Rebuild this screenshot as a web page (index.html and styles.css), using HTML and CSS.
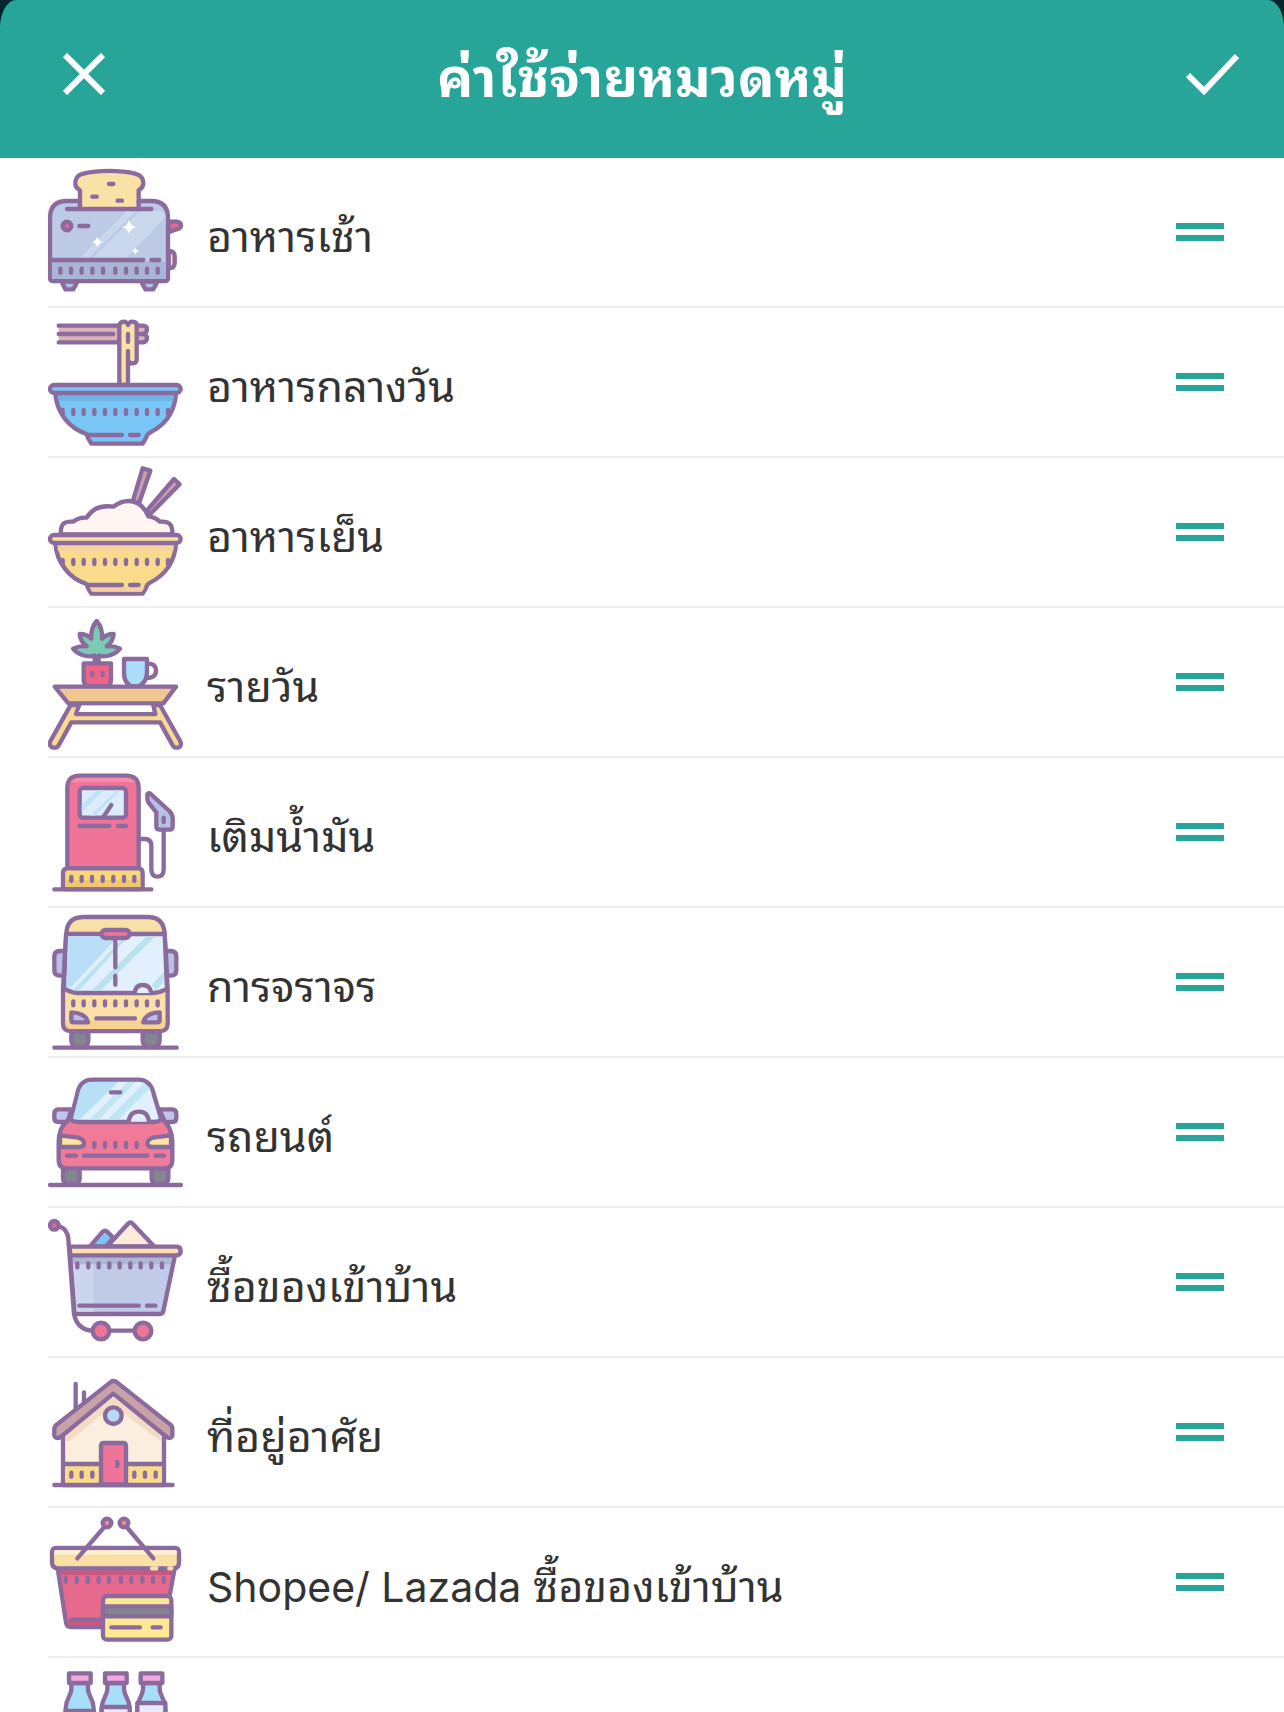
FILE: index.html
```html
<!DOCTYPE html>
<html lang="th">
<head>
    <meta charset="UTF-8">
    <meta name="viewport" content="width=device-width, initial-scale=1.0">
    <title>ค่าใช้จ่ายหมวดหมู่</title>
    <link rel="stylesheet" href="styles.css">
</head>
<body>
    <header class="topbar">
        <button class="topbar-btn" type="button" aria-label="ปิด">
            <svg class="close-icon" viewBox="0 0 42 42"><path d="M2 2L40 40M40 2L2 40"/></svg>
        </button>
        <h1 class="title">ค่าใช้จ่ายหมวดหมู่</h1>
        <button class="topbar-btn save" type="button" aria-label="บันทึก">
            <svg class="check-icon" viewBox="0 0 54 42"><path d="M2 22L18 38L51 3"/></svg>
        </button>
    </header>

    <ul class="list">
        <!-- toaster -->
        <li class="row">
            <svg class="icon" viewBox="54 9 408 444">
                <path fill="#fae2a6" d="M150 160V106C128 94 132 62 160 56C205 45 270 45 315 56C346 64 346 94 326 106V160z"/>
                <path fill="#e8698e" d="M416 200H440Q454 202 453 212Q452 220 440 223L416 232z"/>
                <path fill="#fae2a6" d="M416 288Q434 288 434 304V324Q434 340 416 340z"/>
                <path fill="#b4bfe3" d="M95 380L106 403H130L142 380zM334 380L346 403H370L382 380z"/>
                <path fill="#bccae6" d="M60 368V190Q60 138 110 138H364Q414 138 414 190V368Q414 378 404 378H70Q60 378 60 368z"/>
                <path class="flat" fill="#cad8ee" d="M150 308L290 168H395L408 184L290 308z"/>
                <path class="flat" fill="#bccae6" d="M178 308L318 168H330L190 308z"/>
                <path class="flat" fill="#a8b5d5" d="M66 320H408V372H66z"/>
                <path class="flat" fill="#fae2a6" d="M156 128H320V158H156z"/>
                <path d="M150 160V135M326 160V135M111 162H364M66 315H340M364 315H388M148 213H175"/>
                <path d="M237 87H250M187 125H200M263 137H276"/>
                <path d="M91 341v12M123 341v12M155 341v12M187 341v12M219 341v12M256 341v12M288 341v12M320 341v12M351 341v12M383 341v12"/>
                <circle cx="111" cy="213" r="13" fill="#ee5fa7"/>
                <path class="flat" fill="#fff" d="M297 194Q301 212 318 216Q301 220 297 238Q293 220 276 216Q293 212 297 194zM202 244Q205 258 218 261Q205 264 202 278Q199 264 186 261Q199 258 202 244zM316 277Q318 286 327 288Q318 290 316 299Q314 290 305 288Q314 286 316 277z"/>
            </svg>
            <span class="label">อาหารเช้า</span>
            <button class="handle" type="button" aria-label="ย้าย"></button>
        </li>
        <!-- noodle bowl -->
        <li class="row">
            <svg class="icon" viewBox="54 9 408 444">
                <path class="flat" fill="#ddb3b5" d="M86 62H345L352 87L345 112H86z"/>
                <path fill="none" d="M86 62H340Q352 64 351 74Q350 84 340 87Q352 90 351 100Q350 110 340 112H86M86 87H250M322 87H340"/>
                <path fill="#fae2a6" d="M268 240V62Q270 50 282 50Q290 50 294 60Q298 50 308 50Q320 50 320 62V165Q318 175 308 175Q296 175 294 165V240z"/>
                <path d="M294 87V111M294 138V170"/>
                <path fill="#78c6f5" d="M76 264C80 325 120 370 165 385Q172 388 174 399L184 416H338L348 399Q350 388 360 383C405 360 435 320 438 264z"/>
                <path class="flat" fill="#6eb5e6" d="M82 270H432L430 288H84z"/>
                <rect x="60" y="240" width="392" height="24" rx="12" fill="#78c6f5"/>
                <path d="M174 390H276M300 390H326"/>
                <path d="M98 315v12M130 315v12M161 315v12M193 315v12M225 315v12M256 315v12M288 315v12M320 315v12M351 315v12M383 315v12M414 315v12"/>
            </svg>
            <span class="label">อาหารกลางวัน</span>
            <button class="handle" type="button" aria-label="ย้าย"></button>
        </li>
        <!-- rice bowl -->
        <li class="row">
            <svg class="icon" viewBox="54 9 408 444">
                <path fill="#cba0ae" d="M309 136L338 40L361 47L326 148zM348 170L432 72L449 88L360 178z"/>
                <path fill="#fff6f2" d="M92 238C92 205 102 198 130 200Q145 186 170 188C188 158 215 150 250 155C290 125 335 135 355 184Q375 186 390 200C420 198 428 210 427 238z"/>
                <path fill="#f8dc8c" d="M76 264C80 325 120 370 165 385Q172 388 174 399L184 416H338L348 399Q350 388 360 383C405 360 435 320 438 264z"/>
                <path class="flat" fill="#f5d29c" d="M82 270H432L430 288H84zM178 396H344L336 410H186z"/>
                <rect x="60" y="240" width="392" height="24" rx="12" fill="#fbe2a0"/>
                <path d="M174 390H276M300 390H326"/>
                <path d="M98 315v12M130 315v12M161 315v12M193 315v12M225 315v12M256 315v12M288 315v12M320 315v12M351 315v12M383 315v12M414 315v12"/>
            </svg>
            <span class="label">อาหารเย็น</span>
            <button class="handle" type="button" aria-label="ย้าย"></button>
        </li>
        <!-- table with plant and mug -->
        <li class="row">
            <svg class="icon" viewBox="54 9 408 444">
                <path fill="#79cbb4" d="M194 174V152C172 158 144 150 129 131C144 124 158 122 170 124C157 114 150 100 149 87C163 87 175 92 184 101C182 80 188 62 200 48C212 62 218 80 216 101C225 92 237 87 251 87C250 100 243 114 230 124C242 122 256 124 270 131C255 150 228 158 206 152V174z"/>
                <path fill="#ee6488" d="M161 175H243V225Q243 240 230 244H175Q161 240 161 225z"/>
                <path d="M187 204v7M218 204v7"/>
                <path fill="none" d="M355 176Q378 176 378 197Q378 218 350 219"/>
                <path fill="#a9ddfa" d="M282 162H351V205Q348 236 325 244H306Q282 235 282 205z"/>
                <path fill="#f8da91" d="M122 300L62 407C56 420 62 428 74 428Q82 428 86 421L124 352H390L428 421Q432 428 440 428C452 428 456 418 450 407L390 300H370L376 327H138L148 300z"/>
                <path fill="#f0c791" d="M74 245H438L400 295H115z"/>
                <path class="flat" fill="#fff" d="M156 302H357L366 321H146z"/>
            </svg>
            <span class="label">รายวัน</span>
            <button class="handle" type="button" aria-label="ย้าย"></button>
        </li>
        <!-- fuel pump -->
        <li class="row">
            <svg class="icon" viewBox="54 9 408 444">
                <path fill="#ef7497" d="M112 340V100Q112 62 150 62H288Q326 62 326 100V340z"/>
                <path class="flat" fill="#f88caa" d="M120 82Q130 68 150 68H288Q308 68 318 82z"/>
                <rect x="149" y="99" width="139" height="89" rx="10" fill="#dcecfc"/>
                <path class="flat" fill="#bfe2f4" d="M155 150L200 105H222L155 172zM182 182L259 105H272L195 182z"/>
                <path d="M220 186L244 150M149 213H238M264 213H288"/>
                <path fill="#f8d67c" d="M99 402V354Q99 340 113 340H324Q338 340 338 354V402z"/>
                <path class="flat" fill="#efc76c" d="M106 375H331V397H106z"/>
                <path d="M73 403H364M124 366v12M155 366v12M186 366v12M218 366v12M250 366v12M282 366v12M313 366v12"/>
                <path fill="none" d="M328 252H344Q364 252 364 272V345Q366 365 382 365Q400 365 401 345V228"/>
                <path fill="#b8c0e4" d="M352 124Q350 113 360 115L418 168Q428 178 428 190V214Q428 224 418 224H389Q379 224 379 214V172L355 142Q351 136 352 124z"/>
                <path d="M401 188v13"/>
            </svg>
            <span class="label">เติมน้ำมัน</span>
            <button class="handle" type="button" aria-label="ย้าย"></button>
        </li>
        <!-- bus -->
        <li class="row">
            <svg class="icon" viewBox="54 9 408 444">
                <path fill="#82868f" d="M124 380H175V405Q175 423 160 426H138Q124 423 124 405zM338 380H389V405Q389 423 375 426H353Q338 423 338 405z"/>
                <path fill="#b8c0e8" d="M105 138H90Q73 138 73 154V196Q73 212 90 212H105zM408 138H422Q439 138 439 154V196Q439 212 422 212H408z"/>
                <path fill="#fae0a5" d="M99 250L109 85Q112 36 160 36H354Q400 36 404 85L413 250V355Q413 378 390 378H122Q99 378 99 355z"/>
                <path class="flat" fill="#f8d38f" d="M106 345H406Q408 372 390 372H122Q104 372 106 345z"/>
                <path fill="#e2f0fd" d="M108 87H404L411 252Q390 263 370 264H142Q118 262 102 250z"/>
                <path class="flat" fill="#b9def7" d="M115 94H265L125 245L109 245z"/>
                <path class="flat" fill="#b9e1f0" d="M128 256L285 94H296L146 257zM184 257L350 94H376L210 257zM366 240L401 200V230L378 256z"/>
                <path fill="#e2f0fd" d="M314 264Q316 240 338 240Q360 240 364 264"/>
                <rect x="214" y="75" width="85" height="24" rx="12" fill="#ef7497"/>
                <path d="M256 100V187M256 212V239M199 340H315M73 428H440"/>
                <path d="M130 289v12M161 289v12M193 289v12M225 289v12M256 289v12M288 289v12M320 289v12M351 289v12M383 289v12"/>
                <path fill="#b8c0e8" d="M124 322C148 322 170 332 174 352H132Q124 352 124 344zM389 322C365 322 344 332 340 352H381Q389 352 389 344z"/>
            </svg>
            <span class="label">การจราจร</span>
            <button class="handle" type="button" aria-label="ย้าย"></button>
        </li>
        <!-- car -->
        <li class="row">
            <svg class="icon" viewBox="54 9 408 444">
                <path fill="#82868f" d="M99 340H149V370Q149 382 138 387H111Q99 382 99 370zM365 340H415V370Q415 382 403 387H376Q365 382 365 370z"/>
                <path fill="#bfc6ec" d="M125 163H86Q73 163 73 176V188Q73 201 86 201H112zM388 163H426Q439 163 439 176V188Q439 201 426 201H405z"/>
                <path fill="#f17a99" d="M122 190H394Q410 202 419 222Q427 240 427 260V315Q427 340 402 340H112Q86 340 86 315V260Q86 240 93 222Q105 200 122 190z"/>
                <path fill="#e2f0fd" d="M122 193L141 120Q148 74 188 74H325Q363 74 372 120L394 193Q384 201 370 201H145Q130 201 122 193z"/>
                <path class="flat" fill="#b7dff6" d="M130 190L147 120Q155 81 188 81H265L148 194z"/>
                <path class="flat" fill="#c0e5f5" d="M178 194L293 81H318L205 194zM232 194L342 84L360 99L265 194z"/>
                <path fill="#e2f0fd" d="M296 200C298 180 310 170 327 170C345 170 355 182 357 200"/>
                <path fill="#fce5a0" d="M90 241L145 248Q162 254 162 264Q162 276 148 276H90zM423 241L368 248Q352 254 352 264Q352 276 366 276H423z"/>
                <path d="M243 112H271M111 302H138M162 302H352M377 302H402M60 390H453"/>
                <path d="M193 264v12M225 264v12M256 264v12M288 264v12M320 264v12"/>
            </svg>
            <span class="label">รถยนต์</span>
            <button class="handle" type="button" aria-label="ย้าย"></button>
        </li>
        <!-- shopping cart -->
        <li class="row">
            <svg class="icon" viewBox="54 9 408 444">
                <path fill="#7fc4f8" d="M180 124L218 80Q225 74 232 80L250 98L228 124z"/>
                <path fill="#fdebd9" d="M232 124L294 56Q301 48 308 56L372 124z"/>
                <path fill="#bfcbe7" d="M121 151H435L400 318Q398 327 388 327H134z"/>
                <path class="flat" fill="#cbd6ec" d="M128 170H190V320H140z"/>
                <path class="flat" fill="#adb8d9" d="M128 157H427L422 178H129z"/>
                <path fill="#fbe2ac" d="M119 125H440Q452 126 452 138Q452 150 440 151H121z"/>
                <path fill="none" d="M90 65Q112 72 115 102L132 327Q142 375 188 377H338"/>
                <path d="M148 302H326M351 302H376"/>
                <path d="M142 175v12M175 175v12M206 175v12M238 175v12M269 175v12M301 175v12M332 175v12M364 175v12M396 175v12"/>
                <circle cx="73" cy="61" r="13" fill="#ec6597"/>
                <circle cx="213" cy="378" r="25" fill="#ef7497"/>
                <circle cx="339" cy="378" r="25" fill="#ef7497"/>
            </svg>
            <span class="label">ซื้อของเข้าบ้าน</span>
            <button class="handle" type="button" aria-label="ย้าย"></button>
        </li>
        <!-- house -->
        <li class="row">
            <svg class="icon" viewBox="54 9 408 444">
                <path d="M137 87V180M162 112V160"/>
                <path fill="#fbeede" d="M99 230L250 112L402 230V390H99z"/>
                <path class="flat" fill="#f3dcc3" d="M106 238L250 125L395 238V262L250 150L120 258L106 260z"/>
                <path class="flat" fill="#f8dc8c" d="M106 332H395V386H106z"/>
                <path d="M99 327H402"/>
                <path fill="#c9a1a9" d="M250 78Q256 78 262 83L420 208Q428 214 427 224V242Q422 254 410 246L250 116L92 246Q78 254 73 242V224Q73 214 81 208L240 83Q245 78 250 78z"/>
                <circle cx="250" cy="182" r="25" fill="#b5dbf7"/>
                <path fill="#ef7497" d="M213 388V273Q213 264 222 264H279Q288 264 288 273V388z"/>
                <path d="M73 390H428M262 321v12M124 353v12M155 353v12M187 353v12M313 353v12M345 353v12M377 353v12"/>
            </svg>
            <span class="label">ที่อยู่อาศัย</span>
            <button class="handle" type="button" aria-label="ย้าย"></button>
        </li>
        <!-- basket and card -->
        <li class="row">
            <svg class="icon" viewBox="54 9 408 444">
                <path fill="#e8698e" d="M83 190L108 352Q110 366 124 366H392Q402 366 404 352L434 190z"/>
                <path class="flat" fill="#ce567e" d="M91 197H427L425 210H93zM114 346H219V360H118z"/>
                <path d="M124 344H219"/>
                <path fill="#f9dfa4" d="M66 142Q66 129 79 129H434Q447 129 447 142V172Q447 190 432 190H84Q66 190 66 172z"/>
                <path class="flat" fill="#fdf0d0" d="M73 136H440V149H73z"/>
                <path class="gap" d="M366 190H382M418 190H424"/>
                <path d="M390 192H402M142 160L223 66M370 160L290 66"/>
                <path d="M107 218v12M140 218v12M173 218v12M206 218v12M237 218v12M273 218v12M304 218v12M337 218v12M369 218v12M401 218v12"/>
                <circle cx="231" cy="54" r="13" fill="#f58c91"/>
                <circle cx="282" cy="54" r="13" fill="#f58c91"/>
                <rect x="219" y="273" width="205" height="131" rx="12" fill="#fde895"/>
                <path fill="#82868f" d="M219 304H424V334H219z"/>
                <path d="M244 367H330M368 367H392"/>
            </svg>
            <span class="label"><span class="latin">Shopee/ Lazada</span> ซื้อของเข้าบ้าน</span>
            <button class="handle" type="button" aria-label="ย้าย"></button>
        </li>
        <!-- milk bottles -->
        <li class="row">
            <svg class="icon" viewBox="54 9 408 444">
                <path fill="#a8dff8" d="M124 84H174V102C174 125 191 130 191 160V400H107V160C107 130 124 125 124 102zM232 84H282V102C282 125 299 130 299 160V400H215V160C215 130 232 125 232 102zM339 84H389V102C389 125 406 130 406 160V400H322V160C322 130 339 125 339 102z"/>
                <path fill="#e6ecfb" d="M107 168H191V400H107zM215 156H299V400H215zM322 144H406V400H322z"/>
                <path fill="#f2a9dc" d="M117 55H182V84H117zM225 55H290V84H225zM332 55H397V84H332z"/>
            </svg>
            <span class="label"></span>
            <button class="handle" type="button" aria-label="ย้าย"></button>
        </li>
    </ul>
</body>
</html>
```
FILE: styles.css
```css
* {
    box-sizing: border-box;
}
body {
    margin: 0;
    height: 100vh;
    display: flex;
    flex-direction: column;
    overflow: hidden;
    background-color: #04262c;
    color: #333;
    font-family: Inter, Thonburi, "Noto Sans Thai Looped", Loma, Garuda, "Noto Sans Thai", "Noto Sans", sans-serif;
}
button {
    padding: 0;
    border: none;
    background: none;
    cursor: pointer;
}

/* top bar */
.topbar {
    flex: none;
    display: grid;
    grid-template-columns: 1fr auto 1fr;
    align-items: center;
    height: 158px;
    padding: 0 44px 10px;
    background-color: #27a599;
    border-radius: 16px 16px 0 0 / 28px 28px 0 0;
}
.topbar-btn {
    display: flex;
    justify-self: start;
    margin-left: 19px;
}
.topbar-btn.save {
    justify-self: end;
    margin-left: 0;
}
.topbar-btn svg {
    fill: none;
    stroke: #fff;
    stroke-width: 6;
}
.close-icon {
    width: 42px;
    height: 42px;
}
.check-icon {
    width: 54px;
    height: 42px;
}
.title {
    margin: 0;
    padding-top: 8px;
    color: #fff;
    font-size: 54px;
    font-weight: 700;
    line-height: 72px;
}

/* categories */
.list {
    flex: 1;
    min-height: 0;
    margin: 0;
    padding: 0 0 0 48px;
    list-style: none;
    overflow-y: auto;
    scrollbar-width: none;
    background-color: #fff;
}
.row {
    display: flex;
    align-items: center;
    height: 150px;
    padding-right: 60px;
    border-bottom: 2px solid #eee;
}
.icon {
    flex: none;
    width: 136px;
    height: 148px;
    stroke: #8b6b9d;
    stroke-width: 13;
    stroke-linecap: round;
    stroke-linejoin: round;
}
.icon .flat {
    stroke: none;
}
.icon .gap {
    stroke: #f9dfa4;
}
.label {
    flex: 1;
    padding: 8px 0 0 23px;
    font-size: 43px;
    line-height: 64px;
}
.latin {
    font-size: 41px;
}
.handle {
    width: 48px;
    height: 18px;
    margin-bottom: 1px;
    border-top: 6px solid #27a599;
    border-bottom: 6px solid #27a599;
}
```
